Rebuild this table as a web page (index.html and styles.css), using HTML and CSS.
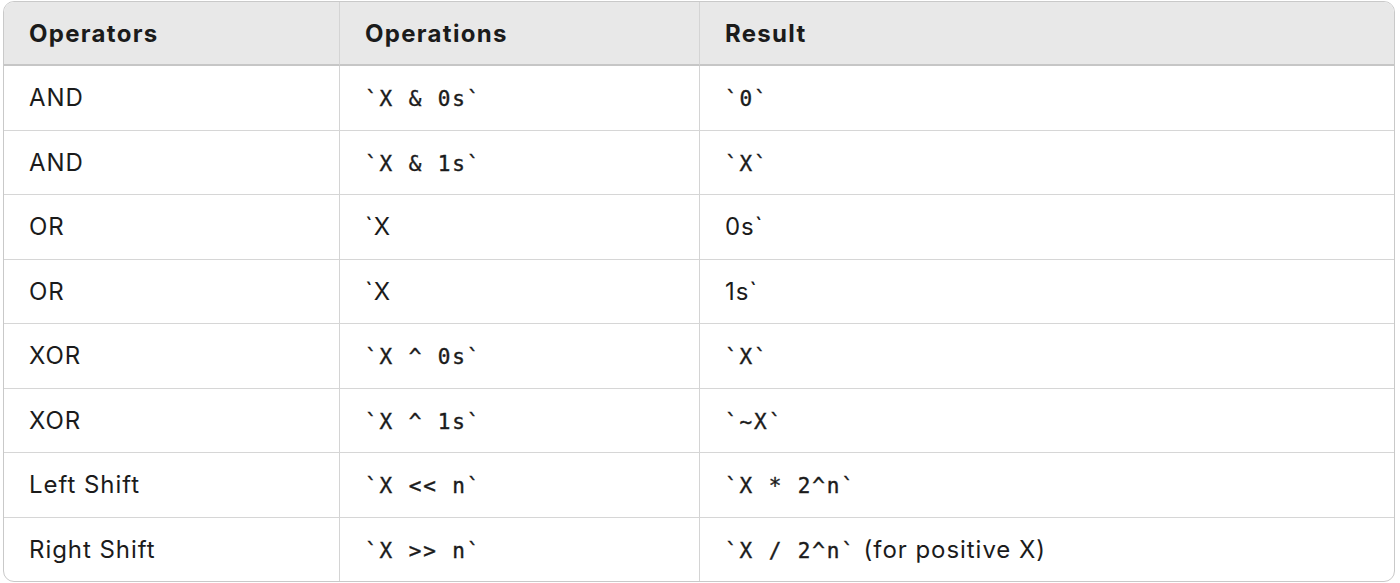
FILE: index.html
```html
<!DOCTYPE html>
<html>
<head>
<meta charset="utf-8">
<link rel="stylesheet" href="styles.css">
</head>
<body>
<div class="wrap">
<table class="ops">
<thead>
<tr><th class="c1">Operators</th><th class="c2">Operations</th><th class="c3">Result</th></tr>
</thead>
<tbody>
<tr><td>AND</td><td><span class="m">`X &amp; 0s`</span></td><td><span class="m">`0`</span></td></tr>
<tr><td>AND</td><td><span class="m">`X &amp; 1s`</span></td><td><span class="m">`X`</span></td></tr>
<tr><td>OR</td><td>`X</td><td>0s`</td></tr>
<tr><td>OR</td><td>`X</td><td>1s`</td></tr>
<tr><td>XOR</td><td><span class="m">`X ^ 0s`</span></td><td><span class="m">`X`</span></td></tr>
<tr><td>XOR</td><td><span class="m">`X ^ 1s`</span></td><td><span class="m">`~X`</span></td></tr>
<tr><td>Left Shift</td><td><span class="m">`X &lt;&lt; n`</span></td><td><span class="m">`X * 2^n`</span></td></tr>
<tr><td>Right Shift</td><td><span class="m">`X &gt;&gt; n`</span></td><td><span class="m">`X / 2^n`</span> (for positive X)</td></tr>
</tbody>
</table>
</div>
</body>
</html>
```
FILE: styles.css
```css
html, body {
  margin: 0;
  padding: 0;
  background: #ffffff;
}
body {
  padding: 1px 5px 0 3px;
  font-family: Inter, "Noto Sans", sans-serif;
  color: #1b1b1b;
}
.wrap {
  border: 1px solid #c9c9c9;
  border-radius: 11px;
  overflow: hidden;
}
.ops {
  width: 100%;
  border-collapse: separate;
  border-spacing: 0;
  table-layout: fixed;
}
.ops th, .ops td {
  text-align: left;
  padding: 0 0 0 25px;
  font-size: 24px;
  letter-spacing: 0.95px;
  vertical-align: middle;
  border-left: 1px solid #d4d4d4;
}
.ops th:first-child, .ops td:first-child {
  border-left: none;
}
.ops th {
  height: 62px;
  background: #e8e8e8;
  font-weight: 700;
  letter-spacing: 1.3px;
  border-bottom: 2px solid #c6c6c6;
}
.ops td {
  height: 63.5px;
  border-bottom: 1px solid #d6d6d6;
  font-weight: 400;
}
.ops tbody tr:last-child td {
  border-bottom: none;
}
.c1 { width: 310px; }
.c2 { width: 334px; }
.m {
  font-family: "DejaVu Sans Mono", "Liberation Mono", monospace;
  font-size: 21px;
  font-weight: 400;
  letter-spacing: 1.9px;
  -webkit-text-stroke: 0.4px #1b1b1b;
}
```
